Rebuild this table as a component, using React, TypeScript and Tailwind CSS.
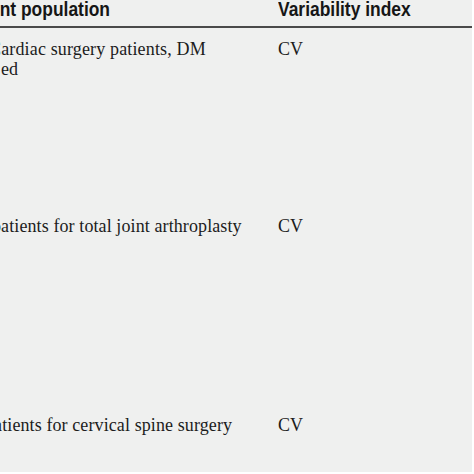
export default function App() {
  const serif = "font-['Liberation_Serif','DejaVu_Serif',serif] text-[18px] leading-[20px]";
  return (
    <div className="w-[474px] h-[474px] overflow-hidden bg-white">
      <div className="w-[472px] h-[472px] overflow-hidden bg-[#eff0ef] text-[#1c1c1c]">
        {/* header */}
        <div className="flex h-[28px] border-b-2 border-[#4a4a4a] font-['Liberation_Sans',Arial,sans-serif] font-bold text-[21px] leading-[18px] text-[#161616]">
          <div className="w-[278px] overflow-hidden whitespace-nowrap">
            <span className="inline-block ml-[-42px] origin-left scale-x-[0.83]">Patient population</span>
          </div>
          <div className="whitespace-nowrap">
            <span className="inline-block origin-left scale-x-[0.83]">Variability index</span>
          </div>
        </div>

        {/* rows */}
        <div className={`flex h-[188px] pt-[11px] ${serif}`}>
          <div className="w-[278px] overflow-hidden whitespace-nowrap">
            <div className="ml-[-11px] tracking-[0.15px]">Cardiac surgery patients, DM</div>
            <div className="ml-[1px]">ed</div>
          </div>
          <div>CV</div>
        </div>
        <div className={`flex h-[199px] ${serif}`}>
          <div className="w-[278px] overflow-hidden whitespace-nowrap">
            <span className="block ml-[-8px] tracking-[0.1px]">patients for total joint arthroplasty</span>
          </div>
          <div>CV</div>
        </div>
        <div className={`flex ${serif}`}>
          <div className="w-[278px] overflow-hidden whitespace-nowrap">
            <span className="block ml-[-16px] tracking-[0.1px]">Patients for cervical spine surgery</span>
          </div>
          <div>CV</div>
        </div>
      </div>
    </div>
  );
}
